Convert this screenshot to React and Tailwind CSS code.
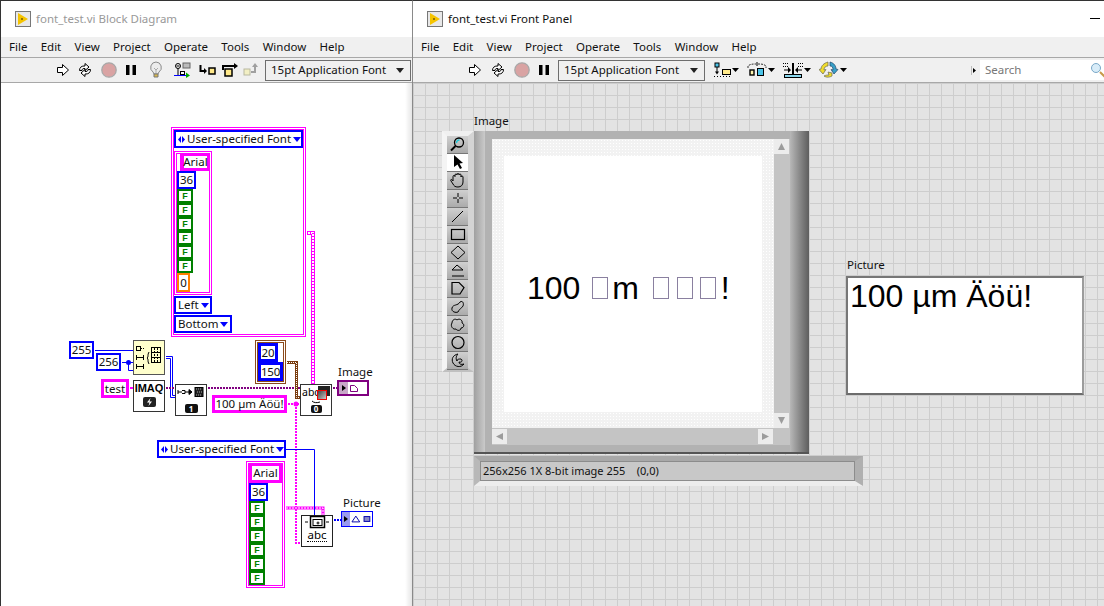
const ui = { fontFamily: '"Noto Sans", "Liberation Sans", sans-serif' };
const arial = { fontFamily: '"Liberation Sans", sans-serif' };

const menus = ['File', 'Edit', 'View', 'Project', 'Operate', 'Tools', 'Window', 'Help'];

const ViIcon = () => (
  <svg width="16" height="16" viewBox="0 0 16 16" className="shrink-0">
    <rect x="0.5" y="0.5" width="15" height="15" fill="#e8e8e8" stroke="#777" />
    <path d="M3 2v12l10-6z" fill="#f5c400" />
    <circle cx="7" cy="8" r="1" fill="#7a5a00" />
  </svg>
);

const RunIcon = () => (
  <svg width="14" height="14" viewBox="0 0 14 14"><path d="M1.5 4.5h5V1.500l6 5.500-6 5.500v-3h-5z" fill="#fff" stroke="#000" /></svg>
);

const RunContIcon = () => (
  <svg width="16" height="16" viewBox="0 0 16 16" fill="none" stroke="#000">
    <path d="M2.500 8.500c0-3 2-4.500 4.500-4.500h1V1.500L12 5 8 8.500V6.500H7C5.500 6.500 5 7.500 5 8.500z" fill="#fff" />
    <path d="M13.500 7.500c0 3-2 4.500-4.500 4.500H8v2.500L4 11l4-3.500v2h1c1.500 0 2-1 2-2z" fill="#fff" />
  </svg>
);

const AbortIcon = () => (
  <svg width="16" height="16" viewBox="0 0 16 16"><circle cx="8" cy="8" r="7.200" fill="#d9a3a3" stroke="#a8a8a8" strokeWidth="1.300" /></svg>
);

const PauseIcon = () => (
  <svg width="10" height="12" viewBox="0 0 10 12"><path d="M0 1h3.500v10H0zM6.500 1H10v10H6.500z" fill="#000" /></svg>
);

const BulbIcon = () => (
  <svg width="14" height="18" viewBox="0 0 14 18" fill="none">
    <path d="M7 1a5.500 5.500 0 0 0-3 10c.6.500.8 1.500.8 2h4.400c0-.5.2-1.500.8-2A5.500 5.500 0 0 0 7 1z" fill="#ececec" stroke="#8a8a8a" />
    <path d="M5 7l2 2 2-2M7 9v4" stroke="#aaa" />
    <path d="M5 13h4v3H5z" fill="#d8b84c" stroke="#777" />
  </svg>
);

const RetainIcon = () => (
  <svg width="18" height="16" viewBox="0 0 18 16" fill="none">
    <circle cx="4" cy="4" r="2.500" stroke="#000" />
    <path d="M2.500 4h3M4 6.500V13" stroke="#000" />
    <rect x="9" y="1" width="7" height="5" fill="#bbb" stroke="#666" />
    <rect x="6.500" y="9.500" width="4" height="3" fill="#fff" stroke="#000" />
    <path d="M0 13.500h12" stroke="#00f" />
    <path d="M12 10.500l4 3-4 2.500z" fill="#0a0" />
  </svg>
);

const StepInIcon = () => (
  <svg width="17" height="12" viewBox="0 0 17 12" fill="none">
    <path d="M1.500 1v6H6" stroke="#000" strokeWidth="2" />
    <path d="M5 4l3 3-3 3z" fill="#000" />
    <rect x="10" y="4" width="6" height="6" fill="#ffe98a" stroke="#000" strokeWidth="1.500" />
  </svg>
);

const StepOverIcon = () => (
  <svg width="16" height="14" viewBox="0 0 16 14" fill="none">
    <rect x="3" y="6" width="7" height="7" fill="#ffe98a" stroke="#000" strokeWidth="1.500" />
    <path d="M1 7V3h11" stroke="#000" strokeWidth="2" />
    <path d="M12 0l4 3-4 3z" fill="#000" />
  </svg>
);

const StepOutIcon = () => (
  <svg width="16" height="14" viewBox="0 0 16 14" fill="none">
    <rect x="1" y="6" width="6" height="6" fill="#f2efc4" stroke="#b8b8a0" />
    <path d="M8 9h4V4" stroke="#a0a0a0" strokeWidth="2" />
    <path d="M9 4l3-4 3 4z" fill="#a0a0a0" />
  </svg>
);

const MiniArrow = () => (
  <svg width="7" height="4" viewBox="0 0 7 4" className="ml-px"><path d="M0 0h7L3.500 4z" fill="#000" /></svg>
);

const AlignIcon = () => (
  <svg width="17" height="16" viewBox="0 0 17 16" fill="none">
    <rect x="1" y="1" width="4" height="4" fill="#4cc4e8" stroke="#000" />
    <rect x="8.500" y="7.500" width="8" height="5" fill="#ffe98a" stroke="#000" />
    <path d="M3 5v6" stroke="#000" />
    <path d="M1 9.500l2 3 2-3z" fill="#000" />
    <path d="M0 14.500h16" stroke="#000" strokeDasharray="1 2" />
  </svg>
);

const DistributeIcon = () => (
  <svg width="20" height="16" viewBox="0 0 20 16" fill="none">
    <path d="M1 6V4c2-2 5-2 8-2M11 2c3 0 6 0 8 2v2" stroke="#333" strokeDasharray="2 1" />
    <path d="M10 0v4" stroke="#000" />
    <rect x="3" y="8" width="4" height="5" fill="#fff6b0" stroke="#000" strokeWidth="1.400" />
    <rect x="10.500" y="6.500" width="6" height="7" fill="#4cc4e8" stroke="#000" />
  </svg>
);

const ResizeIcon = () => (
  <svg width="20" height="16" viewBox="0 0 20 16" fill="none">
    <path d="M0 1.500h5M0 4.500h5M15 1.500h5M15 4.500h5" stroke="#000" strokeDasharray="1 1" />
    <path d="M1 8h5M19 8h-5" stroke="#000" />
    <path d="M5 5l3 3-3 3zM15 5l-3 3 3 3z" fill="#000" />
    <path d="M10 1v11" stroke="#000" strokeWidth="2" />
    <rect x="1.500" y="12.500" width="17" height="3" fill="#8ad8ee" stroke="#000" />
  </svg>
);

const ReorderIcon = () => (
  <svg width="20" height="18" viewBox="0 0 20 18" fill="none">
    <path d="M9 1C5 2 2 5 2 8l-2 .5L4 13l3-4.500-2 .5c0-3 2-4 4-4z" fill="#f0dc2c" stroke="#665" strokeWidth=".7" />
    <path d="M5 15c3 2 6 1 8 0v-3l-4-1 1 3c-2 0-3 0-5 1z" fill="#f0dc2c" stroke="#665" strokeWidth=".7" />
    <path d="M11 1c4 1 6 4 6 7l2 .5L15 13l-3-4.500 2 .5c0-3-1-4-3-4z" fill="#38a0c8" stroke="#246" strokeWidth=".7" />
  </svg>
);

const DropDown = ({ width }) => (
  <div className={`flex h-[21px] items-center justify-between border border-[#6e6e6e] bg-[#f0f0f0] pl-[5px] pr-[6px] text-[11.5px] text-[#111] ${width}`}>
    <span className="whitespace-nowrap">15pt Application Font</span>
    <svg width="8" height="5" viewBox="0 0 8 5"><path d="M0 0h8L4 5z" fill="#222" /></svg>
  </div>
);

const Menu = () => (
  <div className="flex h-[20px] items-center gap-[13.3px] bg-[#f0f0f0] pl-2 text-[11.5px] text-[#111]">
    {menus.map((m) => (
      <span key={m}>{m}</span>
    ))}
  </div>
);

// enum on the diagram, two sizes of the same thing
const EnumBox = ({ label, arrows, className }) => (
  <div className={`flex h-[18px] items-center justify-between border-2 border-[#0000ff] bg-white px-[2px] text-[11.5px] text-[#111] ${className}`}>
    {arrows && (
      <svg width="7" height="7" viewBox="0 0 7 7" className="mr-[2px] shrink-0"><path d="M3 0v7L0 3.500zM4 0v7l3-3.500z" fill="#0000ff" /></svg>
    )}
    <span className="flex-1 whitespace-nowrap leading-none">{label}</span>
    <svg width="8" height="5" viewBox="0 0 8 5" className="ml-[2px] shrink-0"><path d="M0 0h8L4 5z" fill="#0000ff" /></svg>
  </div>
);

const Num = ({ children, className }) => (
  <div className={`flex h-[18px] items-center justify-center whitespace-nowrap border-2 border-[#0000ff] bg-white text-[11.5px] leading-none text-[#111] ${className}`}>
    {children}
  </div>
);

const Str = ({ children, className }) => (
  <div className={`flex items-center justify-center whitespace-nowrap border-[3px] border-[#ff00ff] bg-white text-[11.5px] leading-none text-[#111] ${className}`}>
    {children}
  </div>
);

const Bool = () => (
  <div className="flex h-[14px] w-[16px] items-center justify-center border-2 border-[#008000] bg-white text-[9px] font-bold leading-none text-[#008000]" style={arial}>
    F
  </div>
);

const Wires = () => (
  <svg className="absolute left-0 top-0" width="412" height="523" viewBox="0 83 412 523" fill="none">
    {/* font cluster, top */}
    <path d="M306 233H312V384" stroke="#ff00ff" strokeWidth="4" />
    <path d="M306 233H312V384" stroke="#fff" strokeWidth="2" />
    <path d="M306 233H312V384" stroke="#ff00ff" strokeWidth="2" strokeDasharray="1 2" />
    {/* numbers into the array */}
    <path d="M94 350.500H133M121 362.500H133M127.500 362.500V370.500H133" stroke="#0000ff" />
    <circle cx="127.500" cy="362.500" r="2.500" fill="#0000ff" />
    <path d="M165 356.500H171.500V395.500H175M165 358.500H169.500V397.500H175" stroke="#0000ff" />
    {/* image ref */}
    <path d="M165 388H300M332 388H336" stroke="#800080" strokeWidth="2" strokeDasharray="2 1" />
    <path d="M129 388H133" stroke="#ff00ff" strokeWidth="2" />
    {/* point cluster */}
    <path d="M286 362.500H295.500V397.500H300" stroke="#7a3d10" strokeWidth="3" />
    <path d="M286 362.500H295.500V397.500H300" stroke="#fff" strokeWidth="1" strokeDasharray="1 1" />
    {/* text */}
    <path d="M287 404H300" stroke="#ff00ff" strokeWidth="2" strokeDasharray="2 1" />
    <path d="M295 404V543H301" stroke="#ff00ff" strokeWidth="2" strokeDasharray="2 1" />
    <circle cx="295" cy="404" r="2.500" fill="#ff00ff" />
    {/* second cluster */}
    <path d="M285 508H322V515" stroke="#ff00ff" strokeWidth="3" />
    <path d="M285 508H322V515" stroke="#fff" strokeWidth="1" strokeDasharray="2 1" />
    <path d="M285 449.500H313.500V515" stroke="#0000ff" />
    <path d="M333 520H341" stroke="#0000ff" strokeWidth="2" strokeDasharray="2 1" />
  </svg>
);

const BlockDiagram = () => (
  <div className="relative flex-1 bg-white">
    <Wires />

    {/* user specified font cluster */}
    <div className="absolute left-[170px] top-[44px] flex h-[210px] w-[135px] flex-col gap-[3px] border-[3px] border-double border-[#ff00ff] bg-white">
      <EnumBox label="User-specified Font" arrows className="w-[129px]" />
      <div className="flex h-[144px] w-[38px] flex-col items-start border-[3px] border-double border-[#ff00ff]">
        <Str className="-mt-px ml-[3px] h-[18px] w-[30px] border-l-[4px]">Arial</Str>
        <Num className="w-[19px]">36</Num>
        <Bool /><Bool /><Bool /><Bool /><Bool /><Bool />
        <div className="flex h-[19px] w-[13px] items-center justify-center border-2 border-[#ff8000] text-[11.5px] leading-none text-[#111]">0</div>
      </div>
      <div className="-mt-[2px] flex flex-col gap-px">
        <EnumBox label="Left" className="w-[38px]" />
        <EnumBox label="Bottom" className="w-[58px]" />
      </div>
    </div>

    <Num className="absolute left-[68px] top-[258px] w-[25px]">255</Num>
    <Num className="absolute left-[95px] top-[270px] w-[25px]">256</Num>
    <Str className="absolute left-[100px] top-[296px] h-[19px] w-[28px]">test</Str>

    {/* init array */}
    <div className="absolute left-[132px] top-[257px] flex h-[35px] w-[32px] items-center justify-between border border-[#555] bg-[#ffffcc] px-[2px]">
      <svg width="26" height="29" viewBox="0 0 26 29" fill="none" stroke="#000">
        <rect x="0.500" y="3.500" width="4" height="4" />
        <path d="M5 5.500h4" strokeDasharray="1 1" />
        <path d="M0 14.500h8M0 23.500h8M0.500 12v5M7.500 12v5M0.500 21v5M7.500 21v5" />
        <path d="M13 9c-2 3 0 5-2 6 2 1 0 3 2 6" />
        <rect x="15.500" y="4.500" width="9" height="15" />
        <path d="M18.500 5v14M21.500 5v14M16 9.500h8M16 14.500h8" strokeDasharray="2 1" />
      </svg>
    </div>

    {/* IMAQ create */}
    <div className="absolute left-[132px] top-[297px] flex h-[32px] w-[32px] flex-col items-center border border-[#333] bg-white pt-px">
      <span className="text-[11px] font-bold leading-[13px] text-black" style={arial}>IMAQ</span>
      <svg width="13" height="10" viewBox="0 0 13 10" className="mt-[2px]">
        <rect width="13" height="10" rx="2" fill="#222" />
        <path d="M7.500 1L4 5.500h2.500L5.500 9 9 4.500H6.500z" fill="#fff" />
      </svg>
    </div>

    {/* array to image */}
    <div className="absolute left-[174px] top-[301px] flex h-[32px] w-[32px] flex-col items-center justify-between border border-[#333] bg-white px-px py-[2px]">
      <svg width="28" height="11" viewBox="0 0 28 11" fill="none" stroke="#000">
        <path d="M1 3v4M1 5h4M5 3.500h3v3H5M8 5h4" />
        <path d="M12 2.500l3 2.500-3 2.500z" fill="#000" />
        <rect x="18" y="0.500" width="8" height="9" fill="#222" />
        <path d="M19 2h6M20 5h5M19 8h6" stroke="#aaa" strokeDasharray="1 1" />
      </svg>
      <div className="flex h-[9px] w-[13px] items-center justify-center rounded-[2px] bg-[#111] text-[8px] font-bold leading-none text-white">1</div>
    </div>

    {/* point cluster 20 / 150 */}
    <div className="absolute left-[254px] top-[257px] flex h-[44px] w-[31px] flex-col items-start border-[3px] border-double border-[#8b4a1b] bg-white">
      <Num className="h-[19px] w-[20px] border-[3px]">20</Num>
      <Num className="h-[20px] w-[25px] border-[3px] tracking-tight">150</Num>
    </div>

    <Str className="absolute left-[211px] top-[312px] h-[18px] w-[75px]">100 µm Äöü!</Str>

    {/* draw text node */}
    <div className="absolute left-[299px] top-[301px] flex h-[32px] w-[32px] flex-col items-center border border-[#333] bg-white">
      <span className="w-full pl-px text-[10.5px] leading-[15px] text-black">abc</span>
      <span className="absolute left-[17px] top-px h-[10px] w-[12px] bg-[#222]" />
      <span className="absolute left-[16px] top-[5px] h-[10px] w-[10px] border border-[#f00000] bg-gradient-to-br from-[#444] to-[#ccc]" />
      <svg width="10" height="4" viewBox="0 0 10 4" fill="none"><path d="M1 1c2 2 5 2 8 1" stroke="#000" /></svg>
      <div className="mt-px flex h-[8px] w-[11px] items-center justify-center rounded-[2px] bg-[#111] text-[8px] font-bold leading-none text-white">0</div>
    </div>

    <span className="absolute left-[337px] top-[281px] text-[11.5px] leading-[16px] text-[#111]">Image</span>
    <div className="absolute left-[336px] top-[297px] flex h-[16px] w-[32px] items-center border-2 border-[#800080] bg-white">
      <div className="flex h-full w-[9px] items-center justify-center bg-[#c8a8c8]">
        <svg width="4" height="6" viewBox="0 0 4 6"><path d="M0 0l4 3-4 3z" fill="#000" /></svg>
      </div>
      <svg width="8" height="7" viewBox="0 0 8 7" className="ml-[2px]"><path d="M.5.500h4l3 3v3h-7z" fill="#fff" stroke="#800080" /></svg>
    </div>

    <EnumBox label="User-specified Font" arrows className="absolute left-[156px] top-[357px] w-[129px]" />

    {/* second font cluster */}
    <div className="absolute left-[245px] top-[378px] flex h-[127px] w-[39px] flex-col items-start border-[3px] border-double border-[#ff00ff] bg-white">
      <Str className="-mt-px h-[20px] w-[33px]">Arial</Str>
      <Num className="w-[19px]">36</Num>
      <Bool /><Bool /><Bool /><Bool /><Bool /><Bool />
    </div>

    {/* picture node */}
    <div className="absolute left-[300px] top-[432px] flex h-[32px] w-[32px] flex-col items-center border border-[#222] bg-white">
      <svg width="26" height="13" viewBox="0 0 26 13" fill="none" stroke="#000">
        <path d="M1 6h3M22 6h3" />
        <rect x="6.500" y="0.500" width="14" height="11" strokeWidth="1.500" />
        <rect x="9" y="3.500" width="9" height="6" />
        <circle cx="14" cy="7" r="1" />
      </svg>
      <span className="border-b border-dotted border-black text-[11.5px] leading-[12px] text-black">abc</span>
    </div>

    <span className="absolute left-[342px] top-[412px] text-[11.5px] leading-[16px] text-[#111]">Picture</span>
    <div className="absolute left-[340px] top-[428px] flex h-[16px] w-[32px] items-center border border-[#0000ff] bg-white pr-px">
      <div className="flex h-full w-[8px] items-center justify-center bg-[#9a9af0]">
        <svg width="4" height="6" viewBox="0 0 4 6"><path d="M0 0l4 3-4 3z" fill="#000" /></svg>
      </div>
      <svg width="21" height="8" viewBox="0 0 21 8" fill="none" stroke="#00a" className="ml-px">
        <path d="M1 7l4-6 4 6z" />
        <rect x="13.500" y="1.500" width="6" height="5" fill="#88c" />
      </svg>
    </div>

    <div className="absolute inset-y-0 right-0 w-[7px] bg-gradient-to-r from-transparent to-black/10" />
  </div>
);

const tools = [
  <g key="z" fill="none" stroke="#000" strokeWidth="1.300"><circle cx="10" cy="6.500" r="4.500" /><path d="M6.500 10L2 14.500" strokeWidth="2" /><path d="M7.500 7a3 3 0 0 1 3-3" stroke="#20c8d8" /></g>,
  <path key="a" d="M5 1l9 8-3.500.5L13 14l-2 1-2.500-4.500L5 13z" fill="#000" />,
  <path key="h" d="M4 9V4.500a1 1 0 0 1 2 0V3a1 1 0 0 1 2 0v-.500a1 1 0 0 1 2 0V3a1 1 0 0 1 2 0v2a1 1 0 0 1 2 0v5c0 3-2 5-5 5-3 0-4-1-5-3L2 9c-1-2 1-2 2 0z" fill="none" stroke="#000" />,
  <path key="c" d="M9 3v4M9 9v4M4 8h4M10 8h4" fill="none" stroke="#000" />,
  <path key="l" d="M3 14L14 3" fill="none" stroke="#000" />,
  <rect key="r" x="2.500" y="3.500" width="13" height="10" fill="none" stroke="#000" strokeWidth="1.200" />,
  <path key="d" d="M9 2l7 6.500L9 15 2 8.500z" fill="none" stroke="#000" />,
  <path key="p" d="M3 8l5-5 6 5H3zM3 14h12" fill="none" stroke="#000" />,
  <path key="g" d="M3 2.500h7l5 5-4 6.500H3z" fill="none" stroke="#000" strokeWidth="1.200" />,
  <path key="f" d="M3 10c1-4 6-2 8-6 3-2 4 2 3 4-2 3-3 2-5 6-2 1-7 0-6-4z" fill="none" stroke="#000" />,
  <path key="b" d="M3 7c0-3 3-5 5-3 2-2 6 0 5 3 3 1 2 5-1 5 0 3-4 3-5 1-3 1-6-3-4-6z" fill="none" stroke="#000" />,
  <circle key="o" cx="9" cy="8.500" r="6" fill="none" stroke="#000" strokeWidth="1.200" />,
  <path key="s" d="M9 2C4 3 2 7 4 11c2 4 8 5 11 1-3 1-5 0-5-2 3 1 4-2 2-3-2 0-4 0-4 2-2-3 0-6 1-7z" fill="none" stroke="#000" />,
];

const ToolPalette = () => (
  <div className="absolute left-[29px] top-[48px] flex h-[241px] w-[32px] flex-col gap-0 border-t-[5px] border-b-[4px] border-l-[5px] border-r-[6px] border-t-[#f0f0f0] border-b-[#c0c0c0] border-l-[#f4f4f4] border-r-[#d4d4d4] bg-[#d4d4d4]">
    {tools.map((t, i) => (
      <div key={i} className={`flex h-[18px] w-[21px] shrink-0 items-center justify-center border-b border-[#777] ${i === 1 ? 'bg-white' : 'bg-gradient-to-b from-[#d0d0d0] to-[#ababab]'}`}>
        <svg width="18" height="17" viewBox="0 0 18 17">{t}</svg>
      </div>
    ))}
  </div>
);

const ScrollBtn = ({ d }) => (
  <div className="flex h-[15px] w-[15px] items-center justify-center bg-[#ececec]">
    <svg width="9" height="9" viewBox="0 0 9 9"><path d={d} fill="#9c9c9c" /></svg>
  </div>
);

const Tofu = ({ className }) => (
  <span className={`inline-block h-[22px] w-[16px] border border-[#8a80a0] ${className}`} />
);

const FrontPanel = () => (
  <div className="relative flex-1 overflow-hidden bg-[#e3e3e3] bg-[linear-gradient(to_right,#cdcdcd_1px,transparent_1px),linear-gradient(to_bottom,#cdcdcd_1px,transparent_1px)] bg-[size:12px_12px]">
    <span className="absolute left-[61px] top-[30px] text-[11.5px] leading-[16px] text-[#111]">Image</span>
    <ToolPalette />

    {/* image display */}
    <div className="absolute left-[61px] top-[48px] flex h-[323px] w-[335px] border-b-2 border-[#555]">
      <div className="w-[11px] bg-gradient-to-r from-[#a0a0a0] to-[#cacaca]" />
      <div className="flex-1 bg-[#b2b2b2] pl-[7px] pt-[8px]">
        <div className="grid h-[306px] w-[298px] grid-cols-[282px_16px] grid-rows-[289px_17px] bg-[#c4c4c4]">
          <div className="bg-[#f2f2f2] bg-[radial-gradient(#ffffff_1px,transparent_1px)] bg-[size:3px_3px] px-[12px] py-[17px]">
            <div className="flex h-[256px] items-center bg-white pl-[23px] pt-[7px] text-[32px] leading-none text-black" style={arial}>
              <span className="whitespace-pre">
                100 <Tofu className="ml-[3px] mr-[4px]" />m <Tofu className="ml-[5px]" /><Tofu className="ml-[8px]" /><Tofu className="ml-[7px] mr-[5px]" />!
              </span>
            </div>
          </div>
          <div className="flex flex-col justify-between">
            <ScrollBtn d="M4.500 1L8 8H1z" />
            <ScrollBtn d="M1 1h7L4.500 8z" />
          </div>
          <div className="flex items-start justify-between pr-px pt-px">
            <ScrollBtn d="M8 1v7L1 4.500z" />
            <ScrollBtn d="M1 1v7l7-3.500z" />
          </div>
        </div>
      </div>
      <div className="w-[19px] bg-gradient-to-r from-[#b8b8b8] to-[#5e5e5e]" />
    </div>

    {/* status strip */}
    <div className="absolute left-[61px] top-[373px] h-[30px] w-[389px] border-t-[5px] border-b-[5px] border-l-[6px] border-r-[8px] border-t-[#a8a8a8] border-b-[#ededed] border-l-[#b8b8b8] border-r-[#b0b0b0]">
      <div className="flex h-full items-center border border-[#8c8c8c] bg-[#c8c8c8] pl-[2px] text-[11px] text-[#111]">
        <span className="whitespace-pre">256x256 1X 8-bit image 255    (0,0)</span>
      </div>
    </div>

    <span className="absolute left-[434px] top-[174px] text-[11.5px] leading-[16px] text-[#111]">Picture</span>
    <div className="absolute left-[433px] top-[193px] h-[119px] w-[238px] border-2 border-b-[#6c6c6c] border-l-[#777] border-r-[#9c9c9c] border-t-[#777] bg-white pl-[2px] text-[32px] leading-[36px] text-black" style={arial}>
      100 µm Äöü!
    </div>
  </div>
);

export default function App() {
  return (
    <div className="flex h-[606px] w-[1104px] overflow-hidden bg-white" style={ui}>
      <div className="flex w-[412px] shrink-0 flex-col border-l border-t border-[#333]">
        <div className="flex h-[36px] items-center gap-[5px] bg-white pl-[14px] text-[11.5px] text-[#999]">
          <ViIcon />
          <span>font_test.vi Block Diagram</span>
        </div>
        <Menu />
        <div className="flex h-[26px] items-center border-y border-[#a8a8a8] bg-[#f0f0f0]">
          <div className="flex w-[264px] items-center pl-[51px]">
            <span className="flex w-[21px] justify-center"><RunIcon /></span>
            <span className="flex w-[23px] justify-center"><RunContIcon /></span>
            <span className="flex w-[25px] justify-center"><AbortIcon /></span>
            <span className="flex w-[19px] justify-center"><PauseIcon /></span>
            <span className="flex w-[31px] justify-center"><BulbIcon /></span>
            <span className="flex w-[24px] justify-center"><RetainIcon /></span>
            <span className="flex w-[24px] justify-center"><StepInIcon /></span>
            <span className="flex w-[22px] justify-center"><StepOverIcon /></span>
            <span className="flex w-[20px] justify-center"><StepOutIcon /></span>
          </div>
          <DropDown width="w-[146px]" />
        </div>
        <BlockDiagram />
      </div>

      <div className="flex flex-1 flex-col border-l border-t border-[#333] border-l-[#8a8a8a]">
        <div className="flex h-[36px] items-center gap-[5px] bg-white pl-[14px] text-[11.5px] text-[#111]">
          <ViIcon />
          <span className="flex-1">font_test.vi Front Panel</span>
          <span className="mr-[4px] mt-[-1px] h-px w-[10px] bg-black" />
        </div>
        <Menu />
        <div className="flex h-[26px] items-center border-y border-[#a8a8a8] bg-[#f0f0f0]">
          <div className="flex w-[145px] items-center justify-end pr-[4px]">
            <span className="flex w-[22px] justify-center"><RunIcon /></span>
            <span className="flex w-[24px] justify-center"><RunContIcon /></span>
            <span className="flex w-[24px] justify-center"><AbortIcon /></span>
            <span className="flex w-[20px] justify-center"><PauseIcon /></span>
          </div>
          <DropDown width="w-[147px]" />
          <div className="ml-[9px] flex items-center gap-[8px]">
            <span className="flex items-center"><AlignIcon /><MiniArrow /></span>
            <span className="flex items-center"><DistributeIcon /><MiniArrow /></span>
            <span className="flex items-center"><ResizeIcon /><MiniArrow /></span>
            <span className="flex items-center"><ReorderIcon /><MiniArrow /></span>
          </div>
          <div className="ml-auto flex items-center">
            <svg width="6" height="9" viewBox="0 0 6 9" className="mr-[3px]"><path d="M0 0v9" stroke="#888" /><path d="M2 2l3 2.500L2 7z" fill="#000" /></svg>
            <div className="flex h-[20px] w-[124px] items-center justify-between bg-white pl-[5px] text-[11.5px] text-[#777]">
              <span>Search</span>
              <svg width="16" height="16" viewBox="0 0 16 16" fill="none" className="mr-[-2px]"><circle cx="6" cy="6" r="4.500" fill="#d8ecf8" stroke="#7aa8c8" /><path d="M10 10l5 5" stroke="#c89a4a" strokeWidth="2" /></svg>
            </div>
          </div>
        </div>
        <FrontPanel />
      </div>
    </div>
  );
}
